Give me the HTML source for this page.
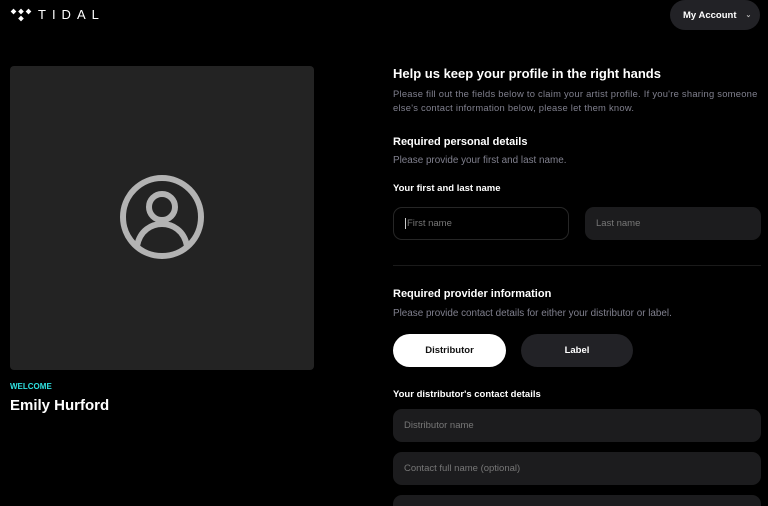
<!DOCTYPE html>
<html><head><style>
*{margin:0;padding:0;box-sizing:border-box}
html,body{width:768px;height:506px;overflow:hidden}
body{background:#000;color:#fff;font-family:"Liberation Sans",sans-serif;position:relative}
.a{position:absolute}
.h{font-weight:bold}
.g{color:#80808e;font-size:9.9px}
.in{position:absolute;border-radius:9px;background:#1c1c1e;color:#777;font-size:9.5px;padding-left:11px;display:flex;align-items:center}
</style></head><body>
<svg class="a" style="left:10px;top:8px" width="22" height="14" viewBox="0 0 22 14"><g fill="#fff"><rect x="1.5" y="1.5" width="4" height="4" transform="rotate(45 3.5 3.5)"/><rect x="9" y="1.5" width="4" height="4" transform="rotate(45 11 3.5)"/><rect x="16.5" y="1.5" width="4" height="4" transform="rotate(45 18.5 3.5)"/><rect x="9" y="8.5" width="4" height="4" transform="rotate(45 11 10.5)"/></g></svg>
<div class="a" style="left:38px;top:7px;font-size:13px;letter-spacing:6px">TIDAL</div>
<div class="a h" style="left:670px;top:0;width:90px;height:30px;border-radius:15px;background:#222226;font-size:9.5px;display:flex;align-items:center;padding-left:13px">My Account <span style="font-size:7px;margin-left:9px;color:#bbb">⌄</span></div>
<div class="a" style="left:10px;top:66px;width:304px;height:304px;background:#232323;border-radius:4px"></div>
<svg class="a" style="left:118px;top:173px" width="88" height="88" viewBox="0 0 88 88"><circle cx="44" cy="44" r="39" fill="none" stroke="#b3b3b3" stroke-width="6"/><circle cx="44" cy="34" r="13" fill="none" stroke="#b3b3b3" stroke-width="6"/><path d="M19 73 C22 57 34 51 44 51 C54 51 66 57 69 73" fill="none" stroke="#b3b3b3" stroke-width="6"/></svg>
<div class="a h" style="left:10px;top:382px;font-size:8px;color:#2fe0e0">WELCOME</div>
<div class="a h" style="left:10px;top:397px;font-size:15px">Emily Hurford</div>
<div class="a h" style="left:393px;top:66px;font-size:13px">Help us keep your profile in the right hands</div>
<div class="a g" style="left:393px;top:87px;line-height:13.5px;white-space:nowrap;font-size:9.4px;letter-spacing:0.25px">Please fill out the fields below to claim your artist profile. If you're sharing someone<br>else's contact information below, please let them know.</div>
<div class="a h" style="left:393px;top:136px;font-size:11px">Required personal details</div>
<div class="a g" style="left:393px;top:155px">Please provide your first and last name.</div>
<div class="a h" style="left:393px;top:183px;font-size:9.5px">Your first and last name</div>
<div class="in" style="left:393px;top:207px;width:176px;height:33px;background:#000;border:1px solid #262626"><span style="border-left:1px solid #ccc;padding-left:1px">First name</span></div>
<div class="in" style="left:585px;top:207px;width:176px;height:33px">Last name</div>
<div class="a" style="left:393px;top:265px;width:368px;height:1px;background:#1a1a1a"></div>
<div class="a h" style="left:393px;top:288px;font-size:11px">Required provider information</div>
<div class="a g" style="left:393px;top:308px">Please provide contact details for either your distributor or label.</div>
<div class="a h" style="left:393px;top:334px;width:113px;height:33px;border-radius:17px;background:#fff;color:#111;font-size:9.5px;display:flex;align-items:center;justify-content:center">Distributor</div>
<div class="a h" style="left:521px;top:334px;width:112px;height:33px;border-radius:17px;background:#222226;font-size:9.5px;display:flex;align-items:center;justify-content:center">Label</div>
<div class="a h" style="left:393px;top:389px;font-size:9.5px">Your distributor's contact details</div>
<div class="in" style="left:393px;top:409px;width:368px;height:33px">Distributor name</div>
<div class="in" style="left:393px;top:452px;width:368px;height:33px">Contact full name (optional)</div>
<div class="in" style="left:393px;top:495px;width:368px;height:11px;border-radius:9px 9px 0 0"></div>
</body></html>
